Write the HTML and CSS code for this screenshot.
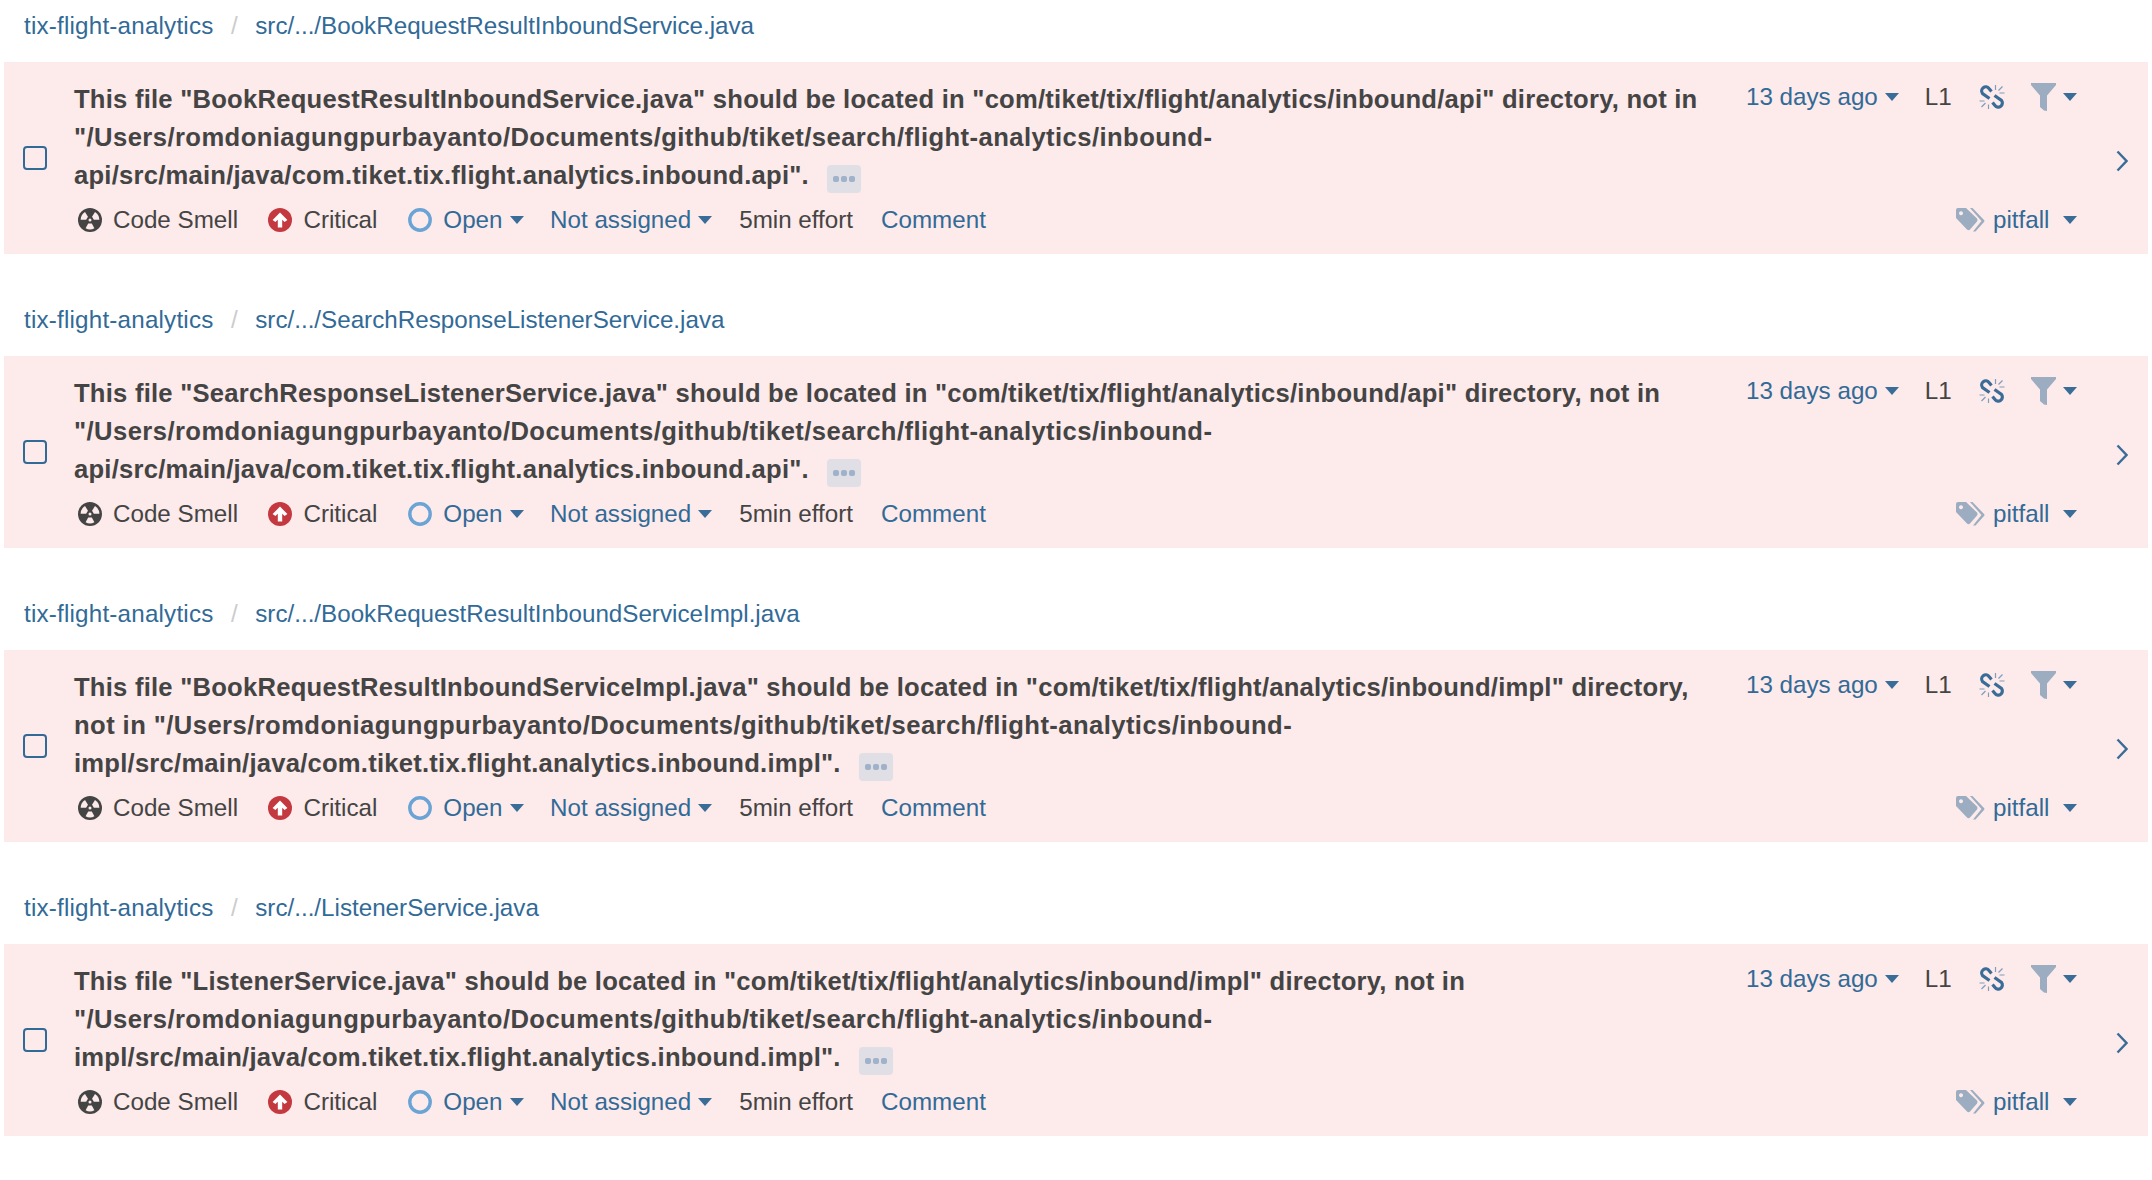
FILE: index.html
```html
<!DOCTYPE html>
<html lang="en">
<head>
<meta charset="utf-8">
<title>Issues</title>
<link rel="stylesheet" href="styles.css">
</head>
<body>
<svg class="defs" width="0" height="0" aria-hidden="true">
  <symbol id="i-smell" viewBox="0 0 24 24">
    <circle cx="12" cy="12" r="12" fill="#444"/>
    <path d="M10.2 15.4 L7.6 20.3 A9.4 9.4 0 0 0 16.4 20.3 L13.8 15.4 Z" fill="#fdeaea"/>
    <path d="M10.2 15.4 L7.6 20.3 A9.4 9.4 0 0 0 16.4 20.3 L13.8 15.4 Z" fill="#fdeaea" transform="rotate(120 12 12)"/>
    <path d="M10.2 15.4 L7.6 20.3 A9.4 9.4 0 0 0 16.4 20.3 L13.8 15.4 Z" fill="#fdeaea" transform="rotate(240 12 12)"/>
    <circle cx="12" cy="12" r="1.5" fill="#fdeaea"/>
  </symbol>
  <symbol id="i-critical" viewBox="0 0 24 24">
    <circle cx="12" cy="12" r="12" fill="#c4383f"/>
    <path d="M12 4.6 L19.4 12 L16.6 14 L14.2 11.8 V19.4 H9.8 V11.8 L7.4 14 L4.6 12 Z" fill="#fff"/>
  </symbol>
  <symbol id="i-open" viewBox="0 0 24 24">
    <circle cx="12" cy="12" r="10.2" fill="none" stroke="#6aa3d5" stroke-width="3.4"/>
  </symbol>
  <symbol id="i-caret" viewBox="0 0 14 8">
    <path d="M0 0 H14 L7 8 Z" fill="#3a6c98"/>
  </symbol>
  <symbol id="i-link" viewBox="0 0 26 26">
    <path d="M12.5 7.5 L10 4.5 A3.9 3.9 0 0 0 3.5 9.5 L10.5 14.5 M13.5 18.5 L16 21.5 A3.9 3.9 0 0 0 22.5 16.5 L15.5 11.5" fill="none" stroke="#3a6c98" stroke-width="3.2"/>
    <path d="M16.5 1 V6 M19.5 6.5 L23.5 2.5 M20.5 9 H25.5 M0.5 17 H5.5 M2.5 23 L6.5 19 M9.5 25 V20.5" fill="none" stroke="#7d9dbb" stroke-width="1.2"/>
  </symbol>
  <symbol id="i-filter" viewBox="0 0 25 28">
    <path d="M0 0 H25 V2 L16 12.5 V28 L13 27.5 L9 24 V12.5 L0 2 Z" fill="#9cadc1"/>
  </symbol>
  <symbol id="i-tags" viewBox="0 0 29 24">
    <path d="M0 2 Q0 0 2 0 H10 L21 10.5 Q22 12 21 13.5 L14 21.5 Q12.5 23 11 21.5 L0 10 Z M5 3.2 A2 2 0 1 0 5.01 3.2 Z" fill="#9cadc1" fill-rule="evenodd"/>
    <path d="M14 0 H16.5 L28 12 Q29 13 28 14 L19.5 23.5 L17 23.5 L25.5 13 Z" fill="#9cadc1"/>
  </symbol>
  <symbol id="i-next" viewBox="0 0 12 22">
    <path d="M1.5 1.5 L10.5 11 L1.5 20.5" fill="none" stroke="#3a6c98" stroke-width="2.4"/>
  </symbol>
</svg>

<main class="issues">
  <section class="group">
    <div class="crumbs"><a>tix-flight-analytics</a><span class="sep">/</span><a>src/.../BookRequestResultInboundService.java</a></div>
    <article class="card">
      <div class="check-col"><span class="check"></span></div>
      <div class="body">
        <div class="top">
          <div class="title">This file "BookRequestResultInboundService.java" should be located in "com/tiket/tix/flight/analytics/inbound/api" directory, not in<br><span class="path">"/Users/romdoniagungpurbayanto/Documents/github/tiket/search/flight-analytics/inbound-</span><br>api/src/main/java/com.tiket.tix.flight.analytics.inbound.api". <span class="more"><i></i><i></i><i></i></span></div>
          <div class="aside"><a class="age">13 days ago<svg class="caret"><use href="#i-caret"/></svg></a><span class="line">L1</span><svg class="ic-link"><use href="#i-link"/></svg><span class="filter"><svg class="ic-filter"><use href="#i-filter"/></svg><svg class="caret"><use href="#i-caret"/></svg></span></div>
        </div>
        <div class="bottom">
          <div class="meta"><span class="m m-type"><svg class="ic"><use href="#i-smell"/></svg>Code Smell</span><span class="m m-sev"><svg class="ic"><use href="#i-critical"/></svg>Critical</span><a class="m m-status"><svg class="ic"><use href="#i-open"/></svg>Open<svg class="caret"><use href="#i-caret"/></svg></a><a class="m m-assign">Not assigned<svg class="caret"><use href="#i-caret"/></svg></a><span class="m m-effort">5min effort</span><a class="m">Comment</a></div>
          <a class="tags"><svg class="ic-tags"><use href="#i-tags"/></svg>pitfall<svg class="caret"><use href="#i-caret"/></svg></a>
        </div>
      </div>
      <svg class="next"><use href="#i-next"/></svg>
    </article>
  </section>

  <section class="group">
    <div class="crumbs"><a>tix-flight-analytics</a><span class="sep">/</span><a>src/.../SearchResponseListenerService.java</a></div>
    <article class="card">
      <div class="check-col"><span class="check"></span></div>
      <div class="body">
        <div class="top">
          <div class="title">This file "SearchResponseListenerService.java" should be located in "com/tiket/tix/flight/analytics/inbound/api" directory, not in<br><span class="path">"/Users/romdoniagungpurbayanto/Documents/github/tiket/search/flight-analytics/inbound-</span><br>api/src/main/java/com.tiket.tix.flight.analytics.inbound.api". <span class="more"><i></i><i></i><i></i></span></div>
          <div class="aside"><a class="age">13 days ago<svg class="caret"><use href="#i-caret"/></svg></a><span class="line">L1</span><svg class="ic-link"><use href="#i-link"/></svg><span class="filter"><svg class="ic-filter"><use href="#i-filter"/></svg><svg class="caret"><use href="#i-caret"/></svg></span></div>
        </div>
        <div class="bottom">
          <div class="meta"><span class="m m-type"><svg class="ic"><use href="#i-smell"/></svg>Code Smell</span><span class="m m-sev"><svg class="ic"><use href="#i-critical"/></svg>Critical</span><a class="m m-status"><svg class="ic"><use href="#i-open"/></svg>Open<svg class="caret"><use href="#i-caret"/></svg></a><a class="m m-assign">Not assigned<svg class="caret"><use href="#i-caret"/></svg></a><span class="m m-effort">5min effort</span><a class="m">Comment</a></div>
          <a class="tags"><svg class="ic-tags"><use href="#i-tags"/></svg>pitfall<svg class="caret"><use href="#i-caret"/></svg></a>
        </div>
      </div>
      <svg class="next"><use href="#i-next"/></svg>
    </article>
  </section>

  <section class="group">
    <div class="crumbs"><a>tix-flight-analytics</a><span class="sep">/</span><a>src/.../BookRequestResultInboundServiceImpl.java</a></div>
    <article class="card">
      <div class="check-col"><span class="check"></span></div>
      <div class="body">
        <div class="top">
          <div class="title">This file "BookRequestResultInboundServiceImpl.java" should be located in "com/tiket/tix/flight/analytics/inbound/impl" directory,<br><span class="path">not in "/Users/romdoniagungpurbayanto/Documents/github/tiket/search/flight-analytics/inbound-</span><br>impl/src/main/java/com.tiket.tix.flight.analytics.inbound.impl". <span class="more"><i></i><i></i><i></i></span></div>
          <div class="aside"><a class="age">13 days ago<svg class="caret"><use href="#i-caret"/></svg></a><span class="line">L1</span><svg class="ic-link"><use href="#i-link"/></svg><span class="filter"><svg class="ic-filter"><use href="#i-filter"/></svg><svg class="caret"><use href="#i-caret"/></svg></span></div>
        </div>
        <div class="bottom">
          <div class="meta"><span class="m m-type"><svg class="ic"><use href="#i-smell"/></svg>Code Smell</span><span class="m m-sev"><svg class="ic"><use href="#i-critical"/></svg>Critical</span><a class="m m-status"><svg class="ic"><use href="#i-open"/></svg>Open<svg class="caret"><use href="#i-caret"/></svg></a><a class="m m-assign">Not assigned<svg class="caret"><use href="#i-caret"/></svg></a><span class="m m-effort">5min effort</span><a class="m">Comment</a></div>
          <a class="tags"><svg class="ic-tags"><use href="#i-tags"/></svg>pitfall<svg class="caret"><use href="#i-caret"/></svg></a>
        </div>
      </div>
      <svg class="next"><use href="#i-next"/></svg>
    </article>
  </section>

  <section class="group">
    <div class="crumbs"><a>tix-flight-analytics</a><span class="sep">/</span><a>src/.../ListenerService.java</a></div>
    <article class="card">
      <div class="check-col"><span class="check"></span></div>
      <div class="body">
        <div class="top">
          <div class="title">This file "ListenerService.java" should be located in "com/tiket/tix/flight/analytics/inbound/impl" directory, not in<br><span class="path">"/Users/romdoniagungpurbayanto/Documents/github/tiket/search/flight-analytics/inbound-</span><br>impl/src/main/java/com.tiket.tix.flight.analytics.inbound.impl". <span class="more"><i></i><i></i><i></i></span></div>
          <div class="aside"><a class="age">13 days ago<svg class="caret"><use href="#i-caret"/></svg></a><span class="line">L1</span><svg class="ic-link"><use href="#i-link"/></svg><span class="filter"><svg class="ic-filter"><use href="#i-filter"/></svg><svg class="caret"><use href="#i-caret"/></svg></span></div>
        </div>
        <div class="bottom">
          <div class="meta"><span class="m m-type"><svg class="ic"><use href="#i-smell"/></svg>Code Smell</span><span class="m m-sev"><svg class="ic"><use href="#i-critical"/></svg>Critical</span><a class="m m-status"><svg class="ic"><use href="#i-open"/></svg>Open<svg class="caret"><use href="#i-caret"/></svg></a><a class="m m-assign">Not assigned<svg class="caret"><use href="#i-caret"/></svg></a><span class="m m-effort">5min effort</span><a class="m">Comment</a></div>
          <a class="tags"><svg class="ic-tags"><use href="#i-tags"/></svg>pitfall<svg class="caret"><use href="#i-caret"/></svg></a>
        </div>
      </div>
      <svg class="next"><use href="#i-next"/></svg>
    </article>
  </section>
</main>
</body>
</html>
```
FILE: styles.css
```css
* { box-sizing: border-box; }
html, body { margin: 0; padding: 0; background: #fff; }
body {
  font-family: "Liberation Sans", Arial, sans-serif;
  font-size: 24.2px;
  color: #444;
  overflow: hidden;
}
.defs { position: absolute; }
a { color: #326a97; }
.issues { display: flex; flex-direction: column; gap: 40px; padding: 0 4px; }
.crumbs {
  height: 62px;
  padding: 0 0 10px 20px;
  display: flex;
  align-items: center;
}
.crumbs a:first-child { letter-spacing: 0.2px; }
.sep { color: #ccc; margin: 0 17.5px; }
.card {
  height: 192px;
  background: #fdeaea;
  display: flex;
  align-items: center;
}
.check-col { width: 70px; padding-left: 19px; flex: none; display: flex; align-items: center; height: 100%; }
.check {
  width: 24px; height: 24px;
  border: 2px solid #326a97;
  border-radius: 4px;
  display: block;
  margin-top: -1px;
}
.body { flex: 1; min-width: 0; height: 100%; display: flex; flex-direction: column; padding-top: 18px; }
.top { display: flex; flex: 1; min-height: 0; }
.title {
  flex: 1;
  min-width: 0;
  font-size: 25.6px;
  letter-spacing: 0.235px;
  font-weight: 700;
  line-height: 38px;
  padding-right: 30px;
}
.path { letter-spacing: 0.43px; }
.more {
  display: inline-flex;
  gap: 2px;
  align-items: center;
  justify-content: center;
  width: 34px;
  height: 28px;
  margin-left: 10.5px;
  background: #e0dfe6;
  border-radius: 4px;
  vertical-align: 2px;
}
.more i { width: 6px; height: 6px; background: #9fb2c9; border-radius: 2px; display: block; }
.aside {
  width: 332px;
  flex: none;
  display: flex;
  align-items: center;
  height: 36px;
  margin-top: -1px;
}
.caret { width: 14px; height: 8px; margin-left: 7px; flex: none; }
.age { display: flex; align-items: center; white-space: nowrap; }
.line { margin-left: 26px; }
.ic-link { width: 26px; height: 26px; margin-left: 27px; flex: none; }
.filter { display: flex; align-items: center; margin-left: 26px; }
.ic-filter { width: 25px; height: 28px; flex: none; }
.bottom { display: flex; align-items: center; justify-content: space-between; height: 44px; margin-bottom: 12px; }
.meta { display: flex; align-items: center; }
.m { display: flex; align-items: center; margin-right: 27px; white-space: nowrap; }
.m-type { margin-right: 26.4px; }
.m-status { margin-right: 26.5px; }
.m-effort { margin-right: 28px; }
.ic { width: 24px; height: 24px; margin: 0 11px 0 4px; flex: none; }
.tags { display: flex; align-items: center; width: 122px; }
.ic-tags { width: 29px; height: 24px; margin-right: 8px; flex: none; }
.tags .caret { margin-left: 14px; }
.next { width: 12px; height: 22px; margin: 6px 20px 0 38px; flex: none; }
```
